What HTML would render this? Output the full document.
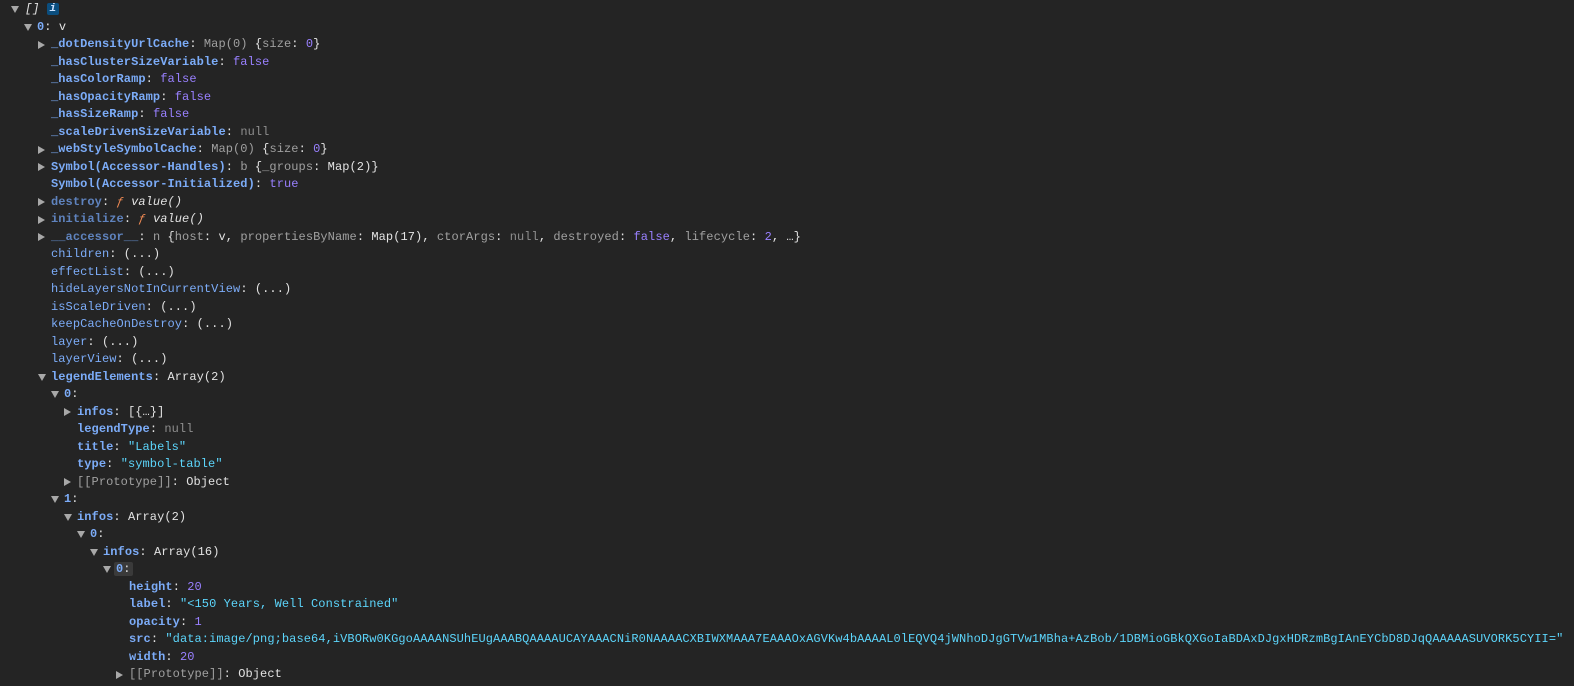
<!DOCTYPE html>
<html><head><meta charset="utf-8"><style>
html,body{margin:0;padding:0;background:#242424;width:1574px;height:686px;overflow:hidden}
body{font-family:"Liberation Mono",monospace;font-size:12px;letter-spacing:0.08px;color:#e3e3e3}
.l{position:absolute;height:17.5px;line-height:17.5px;white-space:pre}
.k{color:#7cacf8;font-weight:bold}
.kn{color:#7cacf8}
.kd{color:#5f83be;font-weight:bold}
.p{color:#9980ff}
.g{color:#a0a0a0}
.n{color:#8e8e8e}
.s{color:#5cd5fb}
.f{color:#f28b54;font-style:italic}
.i{font-style:italic}
.tr{position:absolute;width:0;height:0}
.down{border-left:4px solid transparent;border-right:4px solid transparent;border-top:7px solid #a8a8a8;top:5px}
.right{border-top:4px solid transparent;border-bottom:4px solid transparent;border-left:7px solid #a8a8a8;top:4.5px}
.badge{display:inline-block;background:#0b4e7e;color:#cfe3ff;font-style:italic;font-weight:bold;width:12px;height:12px;line-height:12px;text-align:center;border-radius:2px;font-size:11px;vertical-align:1px}
.hl{background:#3a3a3a;border-radius:2px;padding:0 2px;margin-left:-2px}
</style></head><body>
<div class="l" style="top:1.25px;left:25px"><span class="tr down" style="left:-14px"></span><span class="i">[]</span> <span class="badge">i</span></div>
<div class="l" style="top:18.75px;left:37px"><span class="tr down" style="left:-13px"></span><span class="k">0</span>: v</div>
<div class="l" style="top:36.25px;left:51px"><span class="tr right" style="left:-13px"></span><span class="k">_dotDensityUrlCache</span>: <span class="g">Map(0)</span> {<span class="g">size</span>: <span class="p">0</span>}</div>
<div class="l" style="top:53.75px;left:51px"><span class="k">_hasClusterSizeVariable</span>: <span class="p">false</span></div>
<div class="l" style="top:71.25px;left:51px"><span class="k">_hasColorRamp</span>: <span class="p">false</span></div>
<div class="l" style="top:88.75px;left:51px"><span class="k">_hasOpacityRamp</span>: <span class="p">false</span></div>
<div class="l" style="top:106.25px;left:51px"><span class="k">_hasSizeRamp</span>: <span class="p">false</span></div>
<div class="l" style="top:123.75px;left:51px"><span class="k">_scaleDrivenSizeVariable</span>: <span class="n">null</span></div>
<div class="l" style="top:141.25px;left:51px"><span class="tr right" style="left:-13px"></span><span class="k">_webStyleSymbolCache</span>: <span class="g">Map(0)</span> {<span class="g">size</span>: <span class="p">0</span>}</div>
<div class="l" style="top:158.75px;left:51px"><span class="tr right" style="left:-13px"></span><span class="k">Symbol(Accessor-Handles)</span>: <span class="g">b</span> {<span class="g">_groups</span>: Map(2)}</div>
<div class="l" style="top:176.25px;left:51px"><span class="k">Symbol(Accessor-Initialized)</span>: <span class="p">true</span></div>
<div class="l" style="top:193.75px;left:51px"><span class="tr right" style="left:-13px"></span><span class="kd">destroy</span>: <span class="f">ƒ</span> <span class="i">value()</span></div>
<div class="l" style="top:211.25px;left:51px"><span class="tr right" style="left:-13px"></span><span class="kd">initialize</span>: <span class="f">ƒ</span> <span class="i">value()</span></div>
<div class="l" style="top:228.75px;left:51px"><span class="tr right" style="left:-13px"></span><span class="kd">__accessor__</span>: <span class="g">n</span> {<span class="g">host</span>: v, <span class="g">propertiesByName</span>: Map(17), <span class="g">ctorArgs</span>: <span class="n">null</span>, <span class="g">destroyed</span>: <span class="p">false</span>, <span class="g">lifecycle</span>: <span class="p">2</span>, …}</div>
<div class="l" style="top:246.25px;left:51px"><span class="kn">children</span>: (...)</div>
<div class="l" style="top:263.75px;left:51px"><span class="kn">effectList</span>: (...)</div>
<div class="l" style="top:281.25px;left:51px"><span class="kn">hideLayersNotInCurrentView</span>: (...)</div>
<div class="l" style="top:298.75px;left:51px"><span class="kn">isScaleDriven</span>: (...)</div>
<div class="l" style="top:316.25px;left:51px"><span class="kn">keepCacheOnDestroy</span>: (...)</div>
<div class="l" style="top:333.75px;left:51px"><span class="kn">layer</span>: (...)</div>
<div class="l" style="top:351.25px;left:51px"><span class="kn">layerView</span>: (...)</div>
<div class="l" style="top:368.75px;left:51px"><span class="tr down" style="left:-13px"></span><span class="k">legendElements</span>: Array(2)</div>
<div class="l" style="top:386.25px;left:64px"><span class="tr down" style="left:-13px"></span><span class="k">0</span>:</div>
<div class="l" style="top:403.75px;left:77px"><span class="tr right" style="left:-13px"></span><span class="k">infos</span>: [{…}]</div>
<div class="l" style="top:421.25px;left:77px"><span class="k">legendType</span>: <span class="n">null</span></div>
<div class="l" style="top:438.75px;left:77px"><span class="k">title</span>: <span class="s">"Labels"</span></div>
<div class="l" style="top:456.25px;left:77px"><span class="k">type</span>: <span class="s">"symbol-table"</span></div>
<div class="l" style="top:473.75px;left:77px"><span class="tr right" style="left:-13px"></span><span class="g">[[Prototype]]</span>: Object</div>
<div class="l" style="top:491.25px;left:64px"><span class="tr down" style="left:-13px"></span><span class="k">1</span>:</div>
<div class="l" style="top:508.75px;left:77px"><span class="tr down" style="left:-13px"></span><span class="k">infos</span>: Array(2)</div>
<div class="l" style="top:526.25px;left:90px"><span class="tr down" style="left:-13px"></span><span class="k">0</span>:</div>
<div class="l" style="top:543.75px;left:103px"><span class="tr down" style="left:-13px"></span><span class="k">infos</span>: Array(16)</div>
<div class="l" style="top:561.25px;left:116px"><span class="tr down" style="left:-13px"></span><span class="hl"><span class="k">0</span>:</span></div>
<div class="l" style="top:578.75px;left:129px"><span class="k">height</span>: <span class="p">20</span></div>
<div class="l" style="top:596.25px;left:129px"><span class="k">label</span>: <span class="s">"&lt;150 Years, Well Constrained"</span></div>
<div class="l" style="top:613.75px;left:129px"><span class="k">opacity</span>: <span class="p">1</span></div>
<div class="l" style="top:631.25px;left:129px"><span class="k">src</span>: <span class="s">"data:image/png;base64,iVBORw0KGgoAAAANSUhEUgAAABQAAAAUCAYAAACNiR0NAAAACXBIWXMAAA7EAAAOxAGVKw4bAAAAL0lEQVQ4jWNhoDJgGTVw1MBha+AzBob/1DBMioGBkQXGoIaBDAxDJgxHDRzmBgIAnEYCbD8DJqQAAAAASUVORK5CYII="</span></div>
<div class="l" style="top:648.75px;left:129px"><span class="k">width</span>: <span class="p">20</span></div>
<div class="l" style="top:666.25px;left:129px"><span class="tr right" style="left:-13px"></span><span class="g">[[Prototype]]</span>: Object</div>
</body></html>
